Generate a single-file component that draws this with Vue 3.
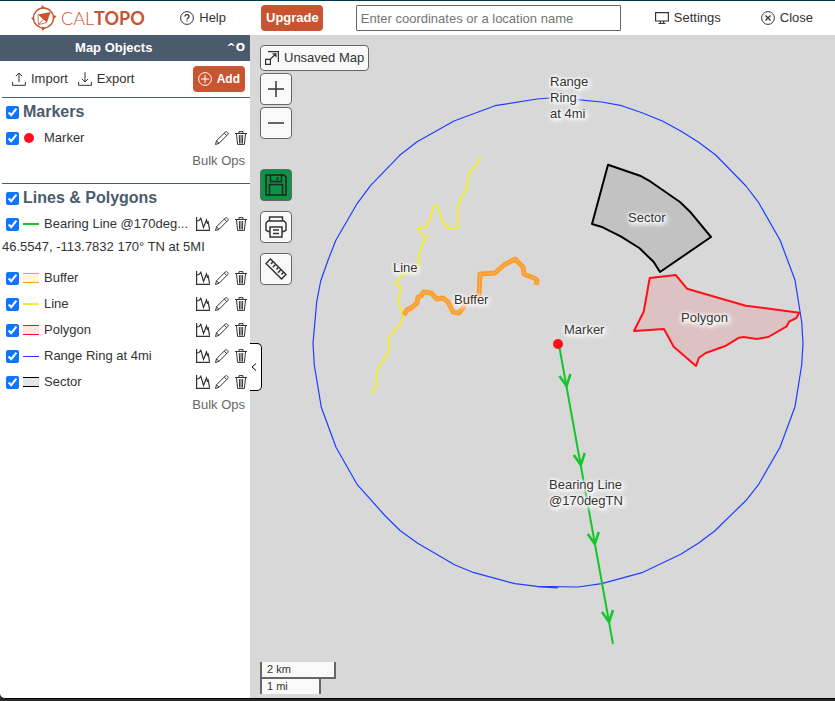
<script setup>
import { ref } from 'vue'

const query = ref('')
const markersOn = ref(true)
const shapesOn = ref(true)

const markers = ref([{ id: 'marker', name: 'Marker', on: true }])

const shapes = ref([
  { id: 'bearing', name: 'Bearing Line @170deg...', kind: 'line', tone: 'green', on: true, note: '46.5547, -113.7832 170° TN at 5MI' },
  { id: 'buffer', name: 'Buffer', kind: 'area', tone: 'orange', on: true },
  { id: 'line', name: 'Line', kind: 'line', tone: 'yellow', on: true },
  { id: 'polygon', name: 'Polygon', kind: 'area', tone: 'red', on: true },
  { id: 'ring', name: 'Range Ring at 4mi', kind: 'line', tone: 'blue', on: true },
  { id: 'sector', name: 'Sector', kind: 'area', tone: 'black', on: true }
])

const labels = [
  { lines: ['Range', 'Ring', 'at 4mi'], x: 300, y: 39 },
  { lines: ['Sector'], x: 378, y: 175 },
  { lines: ['Line'], x: 143, y: 225 },
  { lines: ['Buffer'], x: 204, y: 257 },
  { lines: ['Polygon'], x: 431, y: 275 },
  { lines: ['Marker'], x: 314, y: 287 },
  { lines: ['Bearing Line', '@170degTN'], x: 299, y: 442 }
]

const arrows = [[566.5, 386], [580.8, 465], [594.8, 544], [609, 622]]

const bufferPath =
  'M404 315L407 310L411 308L417 303L418 297L421 296L424 292L431 293L437 299L443 298L448 302L453 312L459 313L463 308L466 300L479 296L480 274L495 273L504 265L515 259L523 267L524 274L536 279L537 281L536 285'
</script>

<template>
  <div class="app">
    <header class="topbar">
      <div class="brand-area">
        <a class="brand" href="#" aria-label="CalTopo">
          <svg class="compass" viewBox="0 0 28 28" aria-hidden="true">
            <circle cx="13.500" cy="14" r="10" fill="none" stroke="currentColor" stroke-width="1.400" />
            <path d="M11 4.500L12 1L15 4ZM23 11L26.500 12L24 15ZM16 23.500L12.500 27L11.500 23.500ZM4 17L1 14L4 13Z" fill="currentColor" />
            <path d="M20.500 8L7.800 10.500L17 18.500Z" fill="currentColor" />
            <path d="M20.500 8L8.500 20.500M7.800 10.500L8.500 20.500L17 18.500" fill="none" stroke="currentColor" stroke-width=".8" />
          </svg>
          <span class="wordmark"><span class="thin">CAL</span>TOPO</span>
        </a>
        <button class="plain help" type="button">
          <svg class="icon" viewBox="0 0 14 14" aria-hidden="true">
            <circle cx="7" cy="7" r="6.400" />
            <path d="M5 5.600C5 3 9 3 9 5.400C9 6.900 7 6.900 7 8.500M7 9.500V10.600" stroke-width="1.300" />
          </svg>
          Help
        </button>
      </div>
      <button class="upgrade" type="button">Upgrade</button>
      <input v-model="query" class="search" type="text" aria-label="Location" placeholder="Enter coordinates or a location name" />
      <button class="plain settings" type="button">
        <svg class="icon" viewBox="0 0 14 14" aria-hidden="true">
          <path d="M.6 1.600H13.400V10H.6ZM5.400 10V12.200M8.600 10V12.200M3.500 12.500H10.500" stroke-width="1.200" />
        </svg>
        Settings
      </button>
      <button class="plain close" type="button">
        <svg class="icon" viewBox="0 0 14 14" aria-hidden="true">
          <circle cx="7" cy="7" r="6.400" />
          <path d="M4.500 4.500L9.500 9.500M9.500 4.500L4.500 9.500" stroke-width="1.300" />
        </svg>
        Close
      </button>
    </header>

    <div class="body">
      <aside class="sidebar">
        <div class="panel-title">
          <h1>Map Objects</h1>
          <button class="panel-toggle" type="button" aria-label="Panel options">^O</button>
        </div>
        <div class="tools">
          <button class="plain" type="button">
            <svg class="icon" viewBox="0 0 14 14" aria-hidden="true">
              <path d="M7 10V1M3.800 4.200L7 1L10.200 4.200M.6 10V13.300H13.400V10" />
            </svg>
            Import
          </button>
          <button class="plain" type="button">
            <svg class="icon" viewBox="0 0 14 14" aria-hidden="true">
              <path d="M7 0V10M3.800 6.800L7 10L10.200 6.800M.6 10V13.300H13.400V10" />
            </svg>
            Export
          </button>
          <button class="add" type="button">
            <svg class="icon" viewBox="0 0 14 14" aria-hidden="true">
              <circle cx="7" cy="7" r="6.400" />
              <path d="M7 3V11M3 7H11" />
            </svg>
            Add
          </button>
        </div>

        <section class="group">
          <h2 class="row">
            <input id="all-markers" v-model="markersOn" type="checkbox" />
            <label for="all-markers">Markers</label>
          </h2>
          <div v-for="m in markers" :key="m.id" class="row">
            <input :id="m.id" v-model="m.on" type="checkbox" />
            <span class="dot"></span>
            <label class="name" :for="m.id">{{ m.name }}</label>
            <button class="tool" type="button" aria-label="Edit">
              <svg class="icon" viewBox="0 0 14 14" aria-hidden="true">
                <path d="M.5 13.500L1.500 9.800L10.200 1.100C11.500 -.2 14 2 12.800 3.500L4 12.300ZM9.200 2.200L11.800 4.600M1.500 9.800L4 12.300" />
              </svg>
            </button>
            <button class="tool bin" type="button" aria-label="Delete">
              <svg class="icon" viewBox="0 0 12 14" aria-hidden="true">
                <path d="M0 2.500H12M4 2.500V.6H8V2.500M1.500 3L2.600 13.400H9.400L10.500 3M4.300 4L4.600 12.500M6 4V12.500M7.700 4L7.400 12.500" />
              </svg>
            </button>
          </div>
          <button class="bulk" type="button">Bulk Ops</button>
        </section>

        <section class="group">
          <h2 class="row">
            <input id="all-shapes" v-model="shapesOn" type="checkbox" />
            <label for="all-shapes">Lines &amp; Polygons</label>
          </h2>
          <template v-for="s in shapes" :key="s.id">
            <div class="row">
              <input :id="s.id" v-model="s.on" type="checkbox" />
              <span :class="['swatch', s.kind, s.tone]"></span>
              <label class="name" :for="s.id">{{ s.name }}</label>
              <button class="tool" type="button" aria-label="Profile">
                <svg class="icon" viewBox="0 0 14 14" aria-hidden="true">
                  <path d="M.6 0V13.400H14M.6 4L3 3.500L4.800 1.200L7.500 10.500L10.500 3L11.300 6L12.200 5L13.500 12.500" stroke-width="1.200" />
                </svg>
              </button>
              <button class="tool" type="button" aria-label="Edit">
                <svg class="icon" viewBox="0 0 14 14" aria-hidden="true">
                  <path d="M.5 13.500L1.500 9.800L10.200 1.100C11.500 -.2 14 2 12.800 3.500L4 12.300ZM9.200 2.200L11.800 4.600M1.500 9.800L4 12.300" />
                </svg>
              </button>
              <button class="tool bin" type="button" aria-label="Delete">
                <svg class="icon" viewBox="0 0 12 14" aria-hidden="true">
                  <path d="M0 2.500H12M4 2.500V.6H8V2.500M1.500 3L2.600 13.400H9.400L10.500 3M4.300 4L4.600 12.500M6 4V12.500M7.700 4L7.400 12.500" />
                </svg>
              </button>
            </div>
            <p v-if="s.note" class="note">{{ s.note }}</p>
          </template>
          <button class="bulk" type="button">Bulk Ops</button>
        </section>
      </aside>

      <main class="map">
        <svg class="canvas" aria-hidden="true">
          <g transform="translate(-250 -35)" fill="none" stroke-linejoin="round">
            <path
              d="M537 99L495 105.700L454 121L416.700 142L399.700 155.300L370.700 185.300L357.300 203.300L336 240L328 260.300L320.700 281L316.700 301.700L313 343.300L314.300 365L321.300 407.300L336 447.300L357.300 484.700L385.300 516L400.300 530.700L417.700 543.300L455 565L474 572.700L515 583.700L537 586.300L578 587L601.700 583.700L642 572.700L680.700 554.300L698.300 543.300L715 530.700L746.700 499.700L758.700 484.300L780 447.300L795 406.700L801.700 365L803 343.300L801.700 322L795 280L780 240L758.700 202.700L746 186L715.700 155L698.300 142L680.700 131L662.300 121L642 112.700L621.700 105.700L601.700 102L577 99.700M537 99L550 98M537 586.700L558 588"
              stroke="#1f3dff" stroke-width="1.200"
            />
            <path
              d="M480.300 157.300L476 165.700L469 172.700L467 187.700L458 205.300V227.300L455.300 228.700L448.300 228L443.300 223L437.700 207L436 205.700L433 207.700L430.700 218.700L428.300 220L427 226.700L418 228.300L420.300 232.700L427 238.300L423 242L419.300 253.300L418 269L402 274L399.700 279.300L396 281V284.300L401 287.700L398.300 301.700L403.300 315L400.300 324.700L393.300 331.700L388 340L390 349L385.300 358.300L379.700 365.300L376.300 375.300L376.700 385L371 394.300"
              stroke="#efeb36" stroke-width="2"
            />
            <path :d="bufferPath" stroke="#ff9d27" stroke-width="5" />
            <path :d="bufferPath" stroke="#e9b574" stroke-width="1" />
            <path
              d="M608 164.700L640 175.700L650.700 181.700L680 202L690 211.700L711 237L660 272L653.700 262L639.300 248L620.700 236.300L602.700 227.300L592 224Z"
              fill="#000" fill-opacity=".1" stroke="#000" stroke-width="2"
            />
            <path
              d="M649.700 278L675.700 275L687 288.700L745.700 305.700L799.300 312.700L796.300 318L789 321.700L786.700 326.300L768.300 337L756.700 339L743.700 337L739 337.700L726 345.700L705.700 353L699 357.700L696 366L673.700 346.700L664 329L634 331L643.700 311.700Z"
              fill="#f00" fill-opacity=".1" stroke="#ff1018" stroke-width="2"
            />
            <g stroke="#14c52c" stroke-width="2">
              <path d="M559 345L613 644" />
              <path v-for="a in arrows" :key="a[1]" :d="`M${a[0] - 7} ${a[1] - 10}L${a[0]} ${a[1]}L${a[0] + 4} ${a[1] - 12}`" stroke-width="2.500" />
            </g>
            <circle cx="558" cy="344" r="5" fill="#ff0f19" />
          </g>
        </svg>

        <span v-for="l in labels" :key="l.lines[0]" class="map-label" :style="{ left: l.x + 'px', top: l.y + 'px' }">
          <span v-for="t in l.lines" :key="t">{{ t }}</span>
        </span>

        <button class="collapse" type="button" aria-label="Collapse panel">
          <svg viewBox="0 0 6 8" aria-hidden="true"><path d="M5 .5L1 4L5 7.500" /></svg>
        </button>

        <div class="controls">
          <button class="control map-name" type="button">
            <svg class="icon" viewBox="0 0 14 14" aria-hidden="true">
              <path d="M3 .6H13.400V11M.6 8.400H5.400V13.400H.6ZM5.500 8L11 2.800M7.500 2.800H11V6.300" stroke-width="1.200" />
            </svg>
            Unsaved Map
          </button>
          <button class="control" type="button" aria-label="Zoom in">
            <svg viewBox="0 0 22 22" aria-hidden="true"><path d="M11 3V19M3 11H19" /></svg>
          </button>
          <button class="control" type="button" aria-label="Zoom out">
            <svg viewBox="0 0 22 22" aria-hidden="true"><path d="M3 11H19" /></svg>
          </button>
          <div class="actions">
            <button class="control save" type="button" aria-label="Save">
              <svg viewBox="0 0 22 22" aria-hidden="true">
                <path d="M1 1H19L21 3V21H1ZM5.500 1V7.500H16.500V1M12.500 3V6M4.500 21V10.500H17.500V21" />
              </svg>
            </button>
            <button class="control" type="button" aria-label="Print">
              <svg viewBox="0 0 22 22" aria-hidden="true">
                <path d="M4.500 5V1H17.500V5M5 15.500H3L1 14V7L3 5H19L21 7V14L19 15.500H17M5 11H17V21H5ZM8 14H14M8 17.500H14" />
              </svg>
            </button>
            <button class="control" type="button" aria-label="Measure">
              <svg viewBox="0 0 22 22" aria-hidden="true">
                <path d="M5.500 1L21 16.500L16.500 21L1 5.500ZM8 3.500L6 6M10.800 6.300L7.800 9.300M13.500 9L11.500 11.500M16 11.500L13 14.800M18.500 14L16.500 16.500" />
              </svg>
            </button>
          </div>
        </div>

        <div class="scale">
          <div class="km">2 km</div>
          <div class="mi">1 mi</div>
        </div>
      </main>
    </div>
  </div>
</template>

<style>
body {
  margin: 0;
  background: #282826;
}
</style>

<style scoped>
* {
  box-sizing: border-box;
}

.app {
  display: flex;
  flex-direction: column;
  min-height: calc(100vh - 2px);
  overflow: hidden;
  border-top: 1px solid #003746;
  border-bottom: 1px solid #000;
  border-bottom-left-radius: 5px;
  background: #fff;
  color: #333;
  font: 13px/16px "Liberation Sans", Arial, sans-serif;
}

button {
  margin: 0;
  padding: 0;
  border: 0;
  background: none;
  color: inherit;
  font: inherit;
  cursor: pointer;
}

svg {
  display: block;
  flex: none;
}

.icon {
  width: 14px;
  height: 14px;
  fill: none;
  stroke: currentColor;
  stroke-width: 1;
}

.plain {
  display: flex;
  align-items: center;
  gap: 5px;
}

.topbar {
  display: flex;
  align-items: center;
  height: 34px;
  padding-right: 22px;
}

.brand-area {
  display: flex;
  flex: none;
  align-items: center;
  justify-content: space-between;
  width: 250px;
  padding: 0 24px 0 30px;
}

.brand {
  display: flex;
  align-items: center;
  gap: 3px;
  color: #c95431;
  text-decoration: none;
}

.compass {
  width: 28px;
  height: 28px;
}

.wordmark {
  font: 700 18px/20px Lato, sans-serif;
}

.thin {
  font-weight: 300;
}

.upgrade {
  height: 26px;
  margin-left: 11px;
  padding: 0 4px 0 5px;
  border-radius: 4px;
  background: #c95431;
  color: #fff;
  font-weight: 700;
}

.search {
  flex: 1;
  min-width: 0;
  height: 26px;
  margin: 0 34px 0 33px;
  padding: 0 4px;
  border: 1px solid #666;
  border-radius: 1px;
  background: #fff;
  color: #333;
  font: inherit;
}

.search::placeholder {
  color: #757575;
}

.close {
  margin-left: 40px;
}

.body {
  display: flex;
  flex: 1;
}

.sidebar {
  flex: none;
  width: 250px;
}

.panel-title {
  display: flex;
  align-items: center;
  height: 26px;
  padding-right: 5px;
  background: #4a5b6d;
  color: #fff;
  font-weight: 700;
}

.panel-title h1 {
  flex: 1;
  margin: 0;
  padding-left: 1px;
  font-size: 13px;
  text-align: center;
}

.panel-toggle {
  font: 700 11px/16px "DejaVu Sans", sans-serif;
}

.tools {
  display: flex;
  align-items: center;
  gap: 10px;
  height: 36px;
  padding: 0 5px 0 12px;
}

.add {
  display: flex;
  align-items: center;
  gap: 5px;
  height: 26px;
  margin-left: auto;
  padding: 0 5px;
  border-radius: 4px;
  background: #c95431;
  color: #fff;
  font-size: 12px;
  font-weight: 700;
}

.group {
  display: flex;
  flex-direction: column;
  margin-left: 2px;
  padding: 1px 3px 12px 4px;
  border-top: 1px solid #4a5b6d;
}

.row {
  display: flex;
  align-items: center;
  height: 26px;
  margin: 0;
}

.row input {
  flex: none;
  width: 13px;
  height: 13px;
  margin: 0 4px 0 0;
  accent-color: #0b76ff;
}

h2.row {
  color: #4a5b6d;
  font-size: 16px;
  line-height: 18px;
}

.name {
  flex: 1;
  min-width: 0;
  overflow: hidden;
  text-overflow: ellipsis;
  white-space: nowrap;
}

.dot {
  width: 10px;
  height: 10px;
  margin: 0 10px 0 1px;
  border-radius: 50%;
  background: #ff0f19;
}

.swatch {
  flex: none;
  width: 16px;
  margin-right: 5px;
}

.line {
  height: 2px;
  background: currentColor;
}

.area {
  height: 10px;
  border: solid currentColor;
  border-width: 1px 0;
}

.green { color: #14c52c; }
.orange { color: #ff9d27; background: #fff4e8; }
.yellow { color: #efeb36; }
.red { color: #ff1018; background: #ffe6e8; }
.blue { height: 1px; color: #1f3dff; }
.black { color: #000; background: #e6e6e6; }

.tool {
  margin-left: 5px;
}

.tool + .bin {
  margin-left: 6px;
}

.bin .icon {
  width: 12px;
}

.note {
  margin: 0 0 8px -4px;
  line-height: 20px;
  white-space: nowrap;
}

.bulk {
  align-self: flex-end;
  margin-right: 2px;
  color: #666;
  line-height: 20px;
}

.map {
  position: relative;
  display: flex;
  flex: 1;
  flex-direction: column;
  align-items: flex-start;
  justify-content: space-between;
  min-width: 0;
  padding: 10px 10px 4px;
  overflow: hidden;
  background: #d8d8d8;
}

.canvas {
  position: absolute;
  inset: 0;
  width: 100%;
  height: 100%;
}

.map-label {
  position: absolute;
  display: flex;
  flex-direction: column;
  white-space: nowrap;
  text-shadow: 0 0 2px #fff, 0 0 4px #fff, 1px 1px 4px #fff, 1px 1px 5px #fff, 2px 2px 6px #fff, 2px 2px 6px #fff;
}

.collapse {
  position: absolute;
  top: 308px;
  left: 0;
  display: grid;
  place-items: center;
  width: 12px;
  height: 48px;
  padding-right: 3px;
  border: 1px solid #000;
  border-left: 0;
  border-radius: 0 5px 5px 0;
  background: #fff;
}

.collapse svg {
  width: 6px;
  height: 8px;
  fill: none;
  stroke: #000;
}

.controls {
  position: relative;
  display: flex;
  flex-direction: column;
  align-items: flex-start;
  gap: 2px;
}

.control {
  display: grid;
  place-items: center;
  width: 32px;
  height: 32px;
  border: 1px solid #666;
  border-radius: 4px;
  background: #f9f9f9;
  color: #333;
}

.control svg:not(.icon) {
  width: 22px;
  height: 22px;
  fill: none;
  stroke: currentColor;
  stroke-width: 1.500;
}

.map-name {
  display: flex;
  align-items: center;
  gap: 5px;
  width: auto;
  height: 26px;
  padding: 0 4px;
}

.actions {
  display: flex;
  flex-direction: column;
  gap: 10px;
  margin-top: 28px;
}

.control.save {
  background: #0b9444;
  color: #222;
}

.scale {
  position: relative;
  font-size: 11px;
  line-height: 15px;
}

.scale div {
  padding-left: 5px;
  border: 0 solid #666;
  border-right-width: 2px;
  border-left-width: 2px;
  background: #f9f9f9;
}

.scale .km {
  width: 76px;
  border-bottom-width: 2px;
}

.scale .mi {
  width: 61px;
}
</style>
